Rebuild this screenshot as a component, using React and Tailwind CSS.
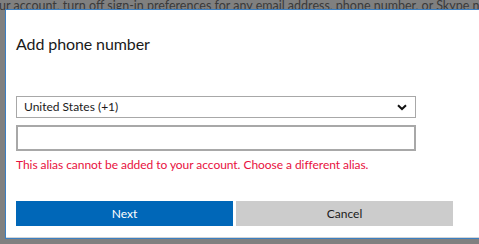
export default function App() {
  return (
    <div className="relative w-[479px] h-[244px] bg-[#808080] overflow-hidden" style={{ fontFamily: 'Lato, "Noto Sans", sans-serif' }}>
      <div className="absolute left-[-1px] top-[-2px] whitespace-nowrap text-[12.5px] leading-[16px] text-[#3a3a3a]">
        ur account, turn off sign-in preferences for any email address, phone number, or Skype name
      </div>
      <div className="absolute left-[5px] top-[9px] w-[520px] h-[230px] bg-white border-l border-t border-b border-[#3c7fc1]">
        <div className="h-full border-b border-[#d4d4d4] pl-[10px] pt-[24px] flex flex-col">
          <div className="text-[16px] leading-[20px] text-[#1a1a1a] tracking-[-0.1px]">Add phone number</div>
          <div className="mt-[42px] w-[400px] h-[22px] border border-[#a8a8a8] flex items-center justify-between pl-[7px] pr-[7px]">
            <span className="text-[12px] text-[#1a1a1a]">United States (+1)</span>
            <svg width="10" height="7" viewBox="0 0 10 7" className="mr-[1px]">
              <path d="M1 1.2 L5 5 L9 1.2" fill="none" stroke="#111" strokeWidth="2" />
            </svg>
          </div>
          <div className="mt-[7px] w-[400px] h-[26px] border-2 border-[#a8a8a8]"></div>
          <div className="mt-[6px] text-[12px] leading-[16px] text-[#e81140] tracking-[-0.05px]">This alias cannot be added to your account. Choose a different alias.</div>
          <div className="mt-[28px] flex gap-[3px]">
            <div className="w-[217px] h-[25px] bg-[#0067b8] text-white text-[12px] flex items-center justify-center">Next</div>
            <div className="w-[217px] h-[25px] bg-[#cccccc] text-[#1a1a1a] text-[12px] flex items-center justify-center">Cancel</div>
          </div>
        </div>
      </div>
    </div>
  );
}
